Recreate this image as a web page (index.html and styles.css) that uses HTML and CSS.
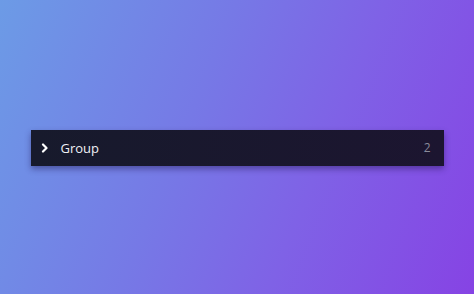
FILE: index.html
```html
<!DOCTYPE html>
<html>

<head>
  <meta http-equiv="Content-Type" content="text/html; charset=UTF-8" />
  <meta name="viewport" content="width=device-width,initial-scale=1.0" />
  <link rel="stylesheet" href="styles.css">
</head>

<body>
  <div class="group-row">
    <svg class="chevron" width="8" height="10" viewBox="0 0 8 10">
      <path d="M2 1.5 L5.5 5 L2 8.5" fill="none" stroke="#fff" stroke-width="2.2" stroke-linecap="round" stroke-linejoin="round" />
    </svg>
    <span class="group-title">Group</span>
    <span class="group-count">2</span>
  </div>
</body>

</html>
```

FILE: styles.css
```css
html {
  height: 100%;
}

body {
  margin: 0;
  height: 100%;
  display: flex;
  align-items: center;
  justify-content: center;
  background: linear-gradient(112deg, #6c9be6 0%, #7679e6 40%, #7f62e6 65%, #8643e4 100%);
  font-family: "Open Sans", "Noto Sans", sans-serif;
}

.group-row {
  width: 413px;
  height: 36px;
  box-sizing: border-box;
  margin-top: 1px;
  display: flex;
  align-items: center;
  padding: 0 13px 0 10px;
  background: linear-gradient(90deg, #171a2c, #1c1530);
  box-shadow: 0 3px 6px rgba(30, 20, 80, 0.45);
}

.chevron {
  flex: none;
}

.group-title {
  margin-left: 12px;
  color: #f0f0f6;
  font-size: 13px;
  flex: 1;
}

.group-count {
  color: #8a8a9a;
  font-size: 12px;
}
```
